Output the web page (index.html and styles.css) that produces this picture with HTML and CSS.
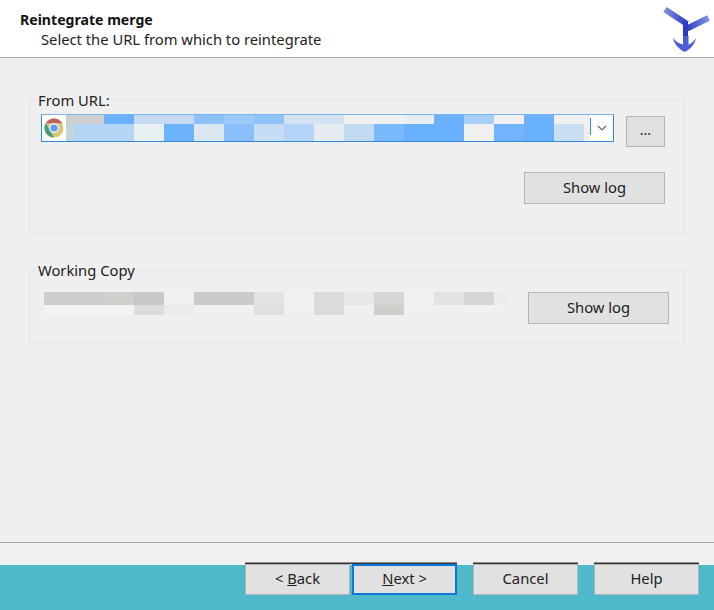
FILE: index.html
```html
<!DOCTYPE html>
<html lang="en">
<head>
<meta charset="utf-8">
<title>Reintegrate merge</title>
<link rel="stylesheet" href="styles.css">
</head>
<body>
<div class="wizard">
  <header class="head">
    <div class="head-text">
      <div class="head-title">Reintegrate merge</div>
      <div class="head-sub">Select the URL from which to reintegrate</div>
    </div>
    <svg class="logo" viewBox="0 0 52 50" aria-hidden="true">
      <defs>
        <linearGradient id="arm" gradientUnits="userSpaceOnUse" x1="2" y1="0" x2="47" y2="0">
          <stop offset="0" stop-color="#8493e2"/>
          <stop offset="0.5" stop-color="#2a3cc4"/>
          <stop offset="1" stop-color="#8493e2"/>
        </linearGradient>
      </defs>
      <path class="logo-arm" d="M3 3.500 L25 18 M46.500 12 L25 22.500" stroke="url(#arm)"/>
      <path class="logo-stem" d="M23.500 16 L23.500 38"/>
      <path class="logo-head" d="M11 32 C14 36 18 38 21 38.500 L21 30 L26.500 30 L26.500 38.500 C29 38 32 35 34 32 C33 38 28 44 22.500 46 C17 43 12 38 11 32 Z"/>
    </svg>
  </header>
  <main class="body">
    <fieldset class="group group-url">
      <legend class="group-label">From URL:</legend>
      <div class="group-inner">
        <div class="url-row">
          <div class="combo">
            <svg class="chrome" viewBox="0 0 20 20" aria-hidden="true">
              <circle cx="10" cy="10" r="9.500" fill="#d8c874"/>
              <path d="M1.800 5.200 A9.500 9.500 0 0 1 18.200 5.200 L10 5.200 Z" fill="#c4605c"/>
              <path d="M1.800 5.200 L10 19.500 A9.500 9.500 0 0 1 1.800 5.200 Z" fill="#3f9e74"/>
              <circle cx="10" cy="10" r="5" fill="#f0f3f6"/>
              <circle cx="10" cy="10" r="3.600" fill="#5f9ef2"/>
            </svg>
            <div class="combo-blur">
              <div class="url-line-a"></div>
              <div class="url-line-b"></div>
            </div>
            <div class="combo-arrow">
              <svg class="chevron" viewBox="0 0 10 6" aria-hidden="true"><path d="M1 1 L5 5 L9 1"/></svg>
            </div>
          </div>
          <button class="btn btn-browse" type="button">...</button>
        </div>
        <div class="log-row">
          <button class="btn btn-log" type="button">Show log</button>
        </div>
      </div>
    </fieldset>
    <fieldset class="group group-wc">
      <legend class="group-label">Working Copy</legend>
      <div class="group-inner wc-row">
        <div class="wc-blur">
          <div class="wc-line-a"></div>
          <div class="wc-line-b"></div>
        </div>
        <button class="btn btn-log" type="button">Show log</button>
      </div>
    </fieldset>
  </main>
  <div class="sep"></div>
  <footer class="foot">
    <div class="foot-buttons">
      <div class="pair">
        <button class="btn foot-btn" type="button">&lt; <u>B</u>ack</button>
        <button class="btn foot-btn btn-default" type="button"><u>N</u>ext &gt;</button>
      </div>
      <button class="btn foot-btn foot-solo" type="button">Cancel</button>
      <button class="btn foot-btn foot-solo" type="button">Help</button>
    </div>
  </footer>
</div>
</body>
</html>
```
FILE: styles.css
```css
* { box-sizing: border-box; }
html, body { margin: 0; padding: 0; }
body {
  width: 714px;
  height: 610px;
  overflow: hidden;
  background: #f0f0f0;
  font-family: "Noto Sans", "Open Sans", sans-serif;
  font-size: 14.750px;
  color: #222;
}
.wizard { display: flex; flex-direction: column; height: 610px; }

.head {
  height: 58px;
  flex: none;
  background: #fff;
  border-bottom: 1px solid #a8a8a8;
  display: flex;
  justify-content: space-between;
  padding: 10px 0 0 20px;
}
.head-title { font-weight: 700; font-size: 14.100px; line-height: 20px; color: #111; }
.head-sub { padding-left: 21px; line-height: 19px; }
.logo { width: 52px; height: 50px; margin: -4px 0 0 0; flex: none; }
.logo-arm { fill: none; stroke-width: 6; }
.logo-stem { fill: none; stroke: #2a3ac6; stroke-width: 5; }
.logo-head { fill: #4c5fd6; }

.body {
  flex: 1;
  background: #efefef;
  padding: 32px 29px 0 29px;
  display: flex;
  flex-direction: column;
  gap: 26px;
}
.group {
  margin: 0;
  padding: 0;
  min-width: 0;
  border: 1.500px solid #e3e3e3;
}
.group-label { margin-left: 8px; padding: 0 1px 0 0; line-height: 20px; color: #222; }
.group-url { height: 144px; }
.group-wc { height: 83px; }
.group-inner { padding: 4px 19px 0 11px; }

.url-row { display: flex; align-items: flex-start; gap: 12px; }
.combo {
  width: 573px;
  height: 28px;
  display: flex;
  border: 1px solid #2d8ae0;
  border-top-color: #78b4ee;
  background: #fff;
  padding-left: 2px;
}
.chrome { width: 20px; height: 20px; flex: none; margin: 3px 2px 0 0; }
.combo-blur { width: 524px; flex: none; display: flex; flex-direction: column; }
.url-line-a {
  height: 10px;
  background: linear-gradient(90deg,
    #cecece 0 38px, #6ab0fb 38px 68px, #c5daf2 68px 128px, #8fc0f8 128px 158px,
    #9dc9f8 158px 188px, #90c3f8 188px 218px, #d5e2f2 218px 278px, #f0f0f0 278px 338px,
    #e8edf1 338px 368px, #6ab0fb 368px 398px, #a9cff8 398px 428px, #f0f0f0 428px 458px,
    #6ab0fb 458px 488px, #f0f0f0 488px);
}
.url-line-b {
  height: 18px;
  background: linear-gradient(90deg,
    #c0d8dc 0 8px, #b5d5f5 8px 68px, #e8eff3 68px 98px, #6cb3fc 98px 128px,
    #dce7f1 128px 158px, #8bbffa 158px 188px, #c5dcf5 188px 218px, #b5d3f6 218px 248px,
    #e6ebf0 248px 278px, #c2daf1 278px 308px, #78b8fb 308px 338px, #69b0fc 338px 398px,
    #f0f0f0 398px 428px, #72b3fb 428px 458px, #69b0fc 458px 488px, #c9ddf3 488px 518px,
    #f0f0f0 518px);
}
.combo-arrow {
  flex: 1;
  display: flex;
  align-items: center;
  justify-content: center;
  border-left: 1px solid #2d8ae0;
  margin: 3px 0 6px;
}
.chevron { width: 10px; height: 6px; margin-top: 2px; }
.chevron path { fill: none; stroke: #666; stroke-width: 1.200; }

.btn {
  font: inherit;
  color: #222;
  background: #e1e1e1;
  border: 1.500px solid #b4b4b4;
  padding: 0 0 2px;
  border-radius: 0;
}
.btn-browse { width: 39px; height: 31px; margin-top: 2px; line-height: 22px; font-size: 14px; padding-bottom: 4px; }
.btn-log { width: 141px; height: 32px; flex: none; }

.log-row { display: flex; justify-content: flex-end; margin-top: 25px; }

.wc-row { display: flex; justify-content: space-between; align-items: flex-start; padding: 12px 15px 0 14px; }
.wc-blur { width: 463px; display: flex; flex-direction: column; }
.wc-line-a {
  height: 13px;
  background: linear-gradient(90deg,
    #cdcdcd 0 60px, #d0cfcc 60px 90px, #c8c8c8 90px 120px, #f0f0f0 120px 150px,
    #cacaca 150px 210px, #e3e3e3 210px 240px, #f0f0f0 240px 270px, #dbdbdb 270px 300px,
    #e8e8e8 300px 330px, #d6d6d6 330px 360px, #f0f0f0 360px 390px, #e2e2e2 390px 420px,
    #d5d5d5 420px 450px, #ececec 450px);
}
.wc-line-b {
  height: 10px;
  background: linear-gradient(90deg,
    #f2f2f2 0 90px, #dcdcdc 90px 120px, #ebebeb 120px 150px, #f0f0f0 150px 210px,
    #e0e0e0 210px 240px, #f0f0f0 240px 270px, #dbdbdb 270px 300px, #f0f0f0 300px 330px,
    #d0cfcc 330px 360px, #f0f0f0 360px);
}

.sep { height: 1px; flex: none; background: #aaa; box-shadow: 0 1px 0 #fbfbfb; }
.foot { flex: none; background: #f0f0f0; padding-top: 22px; }
.foot-buttons {
  height: 45px;
  background: #4db9cb;
  display: flex;
  justify-content: flex-end;
  align-items: flex-start;
  gap: 16px;
  padding-right: 15px;
}
.pair { display: flex; gap: 2px; box-shadow: 0 -1.500px 0 #333; margin-top: -1px; }
.foot-btn { width: 105px; height: 31px; padding-bottom: 3px; }
.foot-solo { box-shadow: 0 -1.500px 0 #333; margin-top: -1px; }
.btn-default { border: 2px solid #0a78d7; }
```
